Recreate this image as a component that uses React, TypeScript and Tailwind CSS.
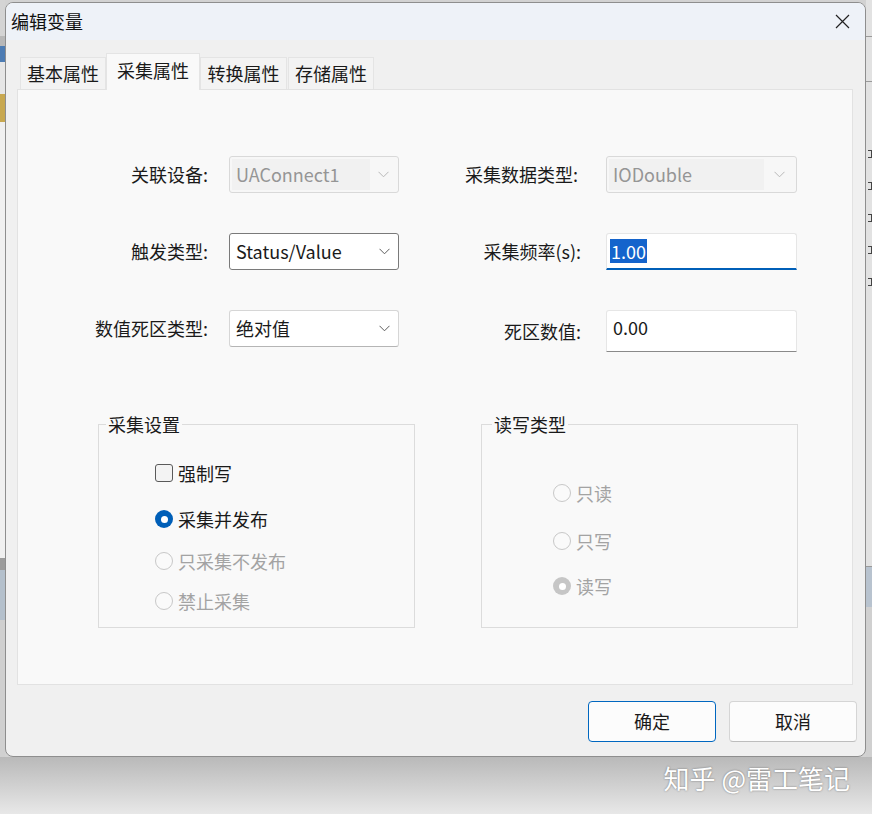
import React from "react";

const cjk = "font-['Noto_Sans_CJK_SC',sans-serif]";

function Chevron({ disabled }: { disabled?: boolean }) {
  return (
    <svg width="11" height="7" viewBox="0 0 11 7" fill="none">
      <polyline
        points="0.5,0.8 5.5,5.8 10.5,0.8"
        stroke={disabled ? "#b8b8b8" : "#5c5c5c"}
        strokeWidth="1"
      />
    </svg>
  );
}

function Combo({ value, disabled, dark }: { value: string; disabled?: boolean; dark?: boolean }) {
  if (disabled) {
    return (
      <div className="flex h-[37px] w-[170px] items-stretch rounded-[3px] border border-[#d9d9d9] bg-[#f7f7f7] p-[2px]">
        <div className="flex flex-1 items-center bg-[#f1f1f1] pl-[4px] text-[18px] text-[#959595]">{value}</div>
        <div className="flex w-[26px] items-center justify-center">
          <Chevron disabled />
        </div>
      </div>
    );
  }
  return (
    <div
      className={
        "flex h-[37px] w-[170px] items-center rounded-[3px] border bg-white pl-[6px] text-[18px] text-[#1a1a1a] " +
        (dark ? "border-[#7a7a7a]" : "border-[#d6d6d6] border-b-[#b5b5b5]")
      }
    >
      <span className="flex-1">{value}</span>
      <div className="flex w-[28px] items-center justify-center">
        <Chevron />
      </div>
    </div>
  );
}

function Radio({ label, checked, disabled }: { label: string; checked?: boolean; disabled?: boolean }) {
  let dot = "border border-[#c8c8c8] bg-[#fafafa]";
  if (checked && !disabled) dot = "bg-[#005fb8]";
  if (checked && disabled) dot = "bg-[#c6c6c6]";
  return (
    <div className="flex h-[24px] items-center">
      <div className={"flex h-[18px] w-[18px] items-center justify-center rounded-full " + dot}>
        {checked && <div className="h-[7px] w-[7px] rounded-full bg-white" />}
      </div>
      <span className={"ml-[5px] text-[18px] leading-[24px] " + (disabled ? "text-[#a3a3a3]" : "text-[#1a1a1a]")}>
        {label}
      </span>
    </div>
  );
}

function Label({ text, w }: { text: string; w: string }) {
  return <div className={"flex h-[37px] items-center justify-end text-[18px] text-[#1a1a1a] " + w}>{text}</div>;
}

export default function App() {
  return (
    <div className={"flex h-[814px] w-[872px] flex-col overflow-hidden bg-[#d2d2d2] " + cjk}>
      <div className="flex h-[757px]">
        {/* background app peeking out on the left */}
        <div className="flex w-[5px] flex-col bg-[#ececec]">
          <div className="h-[36px] bg-[#d4d4d4]" />
          <div className="h-[10px] bg-[#b8b8b8]" />
          <div className="h-[16px] bg-[#4d7cb3]" />
          <div className="h-[32px] bg-[#e6e6e6]" />
          <div className="h-[28px] bg-[#c8a850]" />
          <div className="h-[436px] bg-[#f0f0f0]" />
          <div className="h-[12px] bg-[#9c9c9c]" />
          <div className="h-[50px] bg-[#b4c0cc]" />
          <div className="flex-1 bg-[#d0d0d0]" />
        </div>

        {/* dialog */}
        <div className="mt-[2px] flex h-[755px] w-[861px] flex-col overflow-hidden rounded-[8px] border border-[#8e8e8e] bg-[#f0f0f0]">
          <div className="flex h-[37px] items-center justify-between bg-[#eef2f8] pl-[5px] pr-[15px]">
            <span className="text-[18px] text-[#111]">编辑变量</span>
            <svg width="15" height="15" viewBox="0 0 15 15">
              <path d="M1 1L14 14M14 1L1 14" stroke="#222" strokeWidth="1.2" />
            </svg>
          </div>

          {/* tabs */}
          <div className="mt-[13px] flex h-[36px] items-end pl-[14px]">
            <div className="flex h-[32px] w-[86px] items-center justify-center border border-b-0 border-[#e4e4e4] bg-[#f3f3f3] text-[18px] text-[#1a1a1a]">
              基本属性
            </div>
            <div className="relative z-10 -mb-[1px] flex h-[37px] w-[94px] items-center justify-center border border-b-0 border-[#e4e4e4] bg-[#f9f9f9] pb-[4px] text-[18px] text-[#1a1a1a]">
              采集属性
            </div>
            <div className="flex h-[32px] w-[87px] items-center justify-center border border-b-0 border-[#e4e4e4] bg-[#f3f3f3] text-[18px] text-[#1a1a1a]">
              转换属性
            </div>
            <div className="ml-[1px] flex h-[32px] w-[86px] items-center justify-center border border-b-0 border-[#e4e4e4] bg-[#f3f3f3] text-[18px] text-[#1a1a1a]">
              存储属性
            </div>
          </div>

          {/* tab panel */}
          <div className="ml-[11px] h-[596px] w-[836px] border border-[#e2e2e2] bg-[#f9f9f9] pt-[66px]">
            <div className="flex items-center">
              <Label text="关联设备:" w="w-[190px]" />
              <div className="ml-[21px]">
                <Combo value="UAConnect1" disabled />
              </div>
              <Label text="采集数据类型:" w="w-[179px]" />
              <div className="ml-[28px]">
                <div className="flex h-[37px] w-[191px] items-stretch rounded-[3px] border border-[#d9d9d9] bg-[#f7f7f7] p-[2px]">
                  <div className="flex flex-1 items-center bg-[#f1f1f1] pl-[4px] text-[18px] text-[#959595]">IODouble</div>
                  <div className="flex w-[30px] items-center justify-center">
                    <Chevron disabled />
                  </div>
                </div>
              </div>
            </div>

            <div className="mt-[40px] flex items-center">
              <Label text="触发类型:" w="w-[190px]" />
              <div className="ml-[21px]">
                <Combo value="Status/Value" dark />
              </div>
              <Label text="采集频率(s):" w="w-[182px]" />
              <div className="ml-[25px] flex h-[37px] w-[191px] items-center rounded-t-[3px] border border-b-2 border-[#e6e6e6] border-b-[#005fb8] bg-white pl-[3px]">
                <span className="bg-[#1464cc] px-[1px] text-[18px] leading-[24px] text-white">1.00</span>
              </div>
            </div>

            <div className="mt-[40px] flex items-start">
              <Label text="数值死区类型:" w="w-[190px]" />
              <div className="ml-[21px]">
                <Combo value="绝对值" />
              </div>
              <div className="flex h-[42px] items-center">
                <Label text="死区数值:" w="w-[182px]" />
              </div>
              <div className="ml-[25px] h-[42px] w-[191px] rounded-t-[3px] border border-[#e6e6e6] border-b-[#8a8a8a] bg-white pl-[6px] pt-[4px] text-[18px] leading-[24px] text-[#1a1a1a]">
                0.00
              </div>
            </div>

            {/* group boxes */}
            <div className="ml-[80px] mt-[60px] flex gap-[66px]">
              <fieldset className="h-[216px] w-[317px] border border-[#dcdcdc]">
                <legend className="ml-[7px] px-[2px] text-[18px] leading-[24px] text-[#1a1a1a]">采集设置</legend>
                <div className="pl-[56px] pt-[25px]">
                  <div className="flex h-[24px] items-center">
                    <div className="h-[18px] w-[18px] rounded-[3px] border border-[#5a5a5a] bg-[#f3f3f3]" />
                    <span className="ml-[5px] text-[18px] leading-[24px] text-[#1a1a1a]">强制写</span>
                  </div>
                  <div className="mt-[22px]">
                    <Radio label="采集并发布" checked />
                  </div>
                  <div className="mt-[18px]">
                    <Radio label="只采集不发布" disabled />
                  </div>
                  <div className="mt-[16px]">
                    <Radio label="禁止采集" disabled />
                  </div>
                </div>
              </fieldset>

              <fieldset className="h-[216px] w-[317px] border border-[#dcdcdc]">
                <legend className="ml-[10px] px-[2px] text-[18px] leading-[24px] text-[#1a1a1a]">读写类型</legend>
                <div className="pl-[71px] pt-[45px]">
                  <Radio label="只读" disabled />
                  <div className="mt-[24px]">
                    <Radio label="只写" disabled />
                  </div>
                  <div className="mt-[21px]">
                    <Radio label="读写" checked disabled />
                  </div>
                </div>
              </fieldset>
            </div>
          </div>

          {/* buttons */}
          <div className="mt-[16px] flex justify-end gap-[13px] pr-[8px]">
            <button className="h-[41px] w-[128px] rounded-[4px] border border-[#0067c0] bg-[#fcfcfc] text-[18px] text-[#1a1a1a]">
              确定
            </button>
            <button className="h-[41px] w-[128px] rounded-[4px] border border-[#d5d5d5] border-b-[#bdbdbd] bg-[#fcfcfc] text-[18px] text-[#1a1a1a]">
              取消
            </button>
          </div>
        </div>

        {/* background app peeking out on the right */}
        <div className="flex w-[6px] flex-col bg-[#e2e2e2]">
          <div className="h-[36px]" />
          <div className="h-[1px] bg-[#9a9a9a]" />
          <div className="h-[44px]" />
          <div className="h-[1px] bg-[#9a9a9a]" />
          <div className="h-[68px]" />
          <div className="ml-[2px] h-[8px] w-[4px] border border-l-0 border-[#444]" />
          <div className="h-[24px]" />
          <div className="ml-[2px] h-[8px] w-[4px] border border-l-0 border-[#444]" />
          <div className="h-[24px]" />
          <div className="ml-[2px] h-[8px] w-[4px] border border-l-0 border-[#444]" />
          <div className="h-[24px]" />
          <div className="ml-[2px] h-[8px] w-[4px] border border-l-0 border-[#444]" />
          <div className="h-[24px]" />
          <div className="ml-[2px] h-[8px] w-[4px] border border-l-0 border-[#444]" />
          <div className="h-[280px]" />
          <div className="h-[1px] bg-[#9a9a9a]" />
          <div className="h-[40px] bg-[#b8c3cf]" />
          <div className="flex-1 bg-[#d0d0d0]" />
        </div>
      </div>

      {/* shadow strip with watermark */}
      <div className="flex flex-1 justify-end bg-gradient-to-b from-[#b9b9b9] to-[#e8e8e8] pr-[22px] pt-[4px]">
        <span className="text-[26px] leading-[34px] text-white [text-shadow:0_0_2px_rgba(0,0,0,0.45)]">
          知乎 @雷工笔记
        </span>
      </div>
    </div>
  );
}
